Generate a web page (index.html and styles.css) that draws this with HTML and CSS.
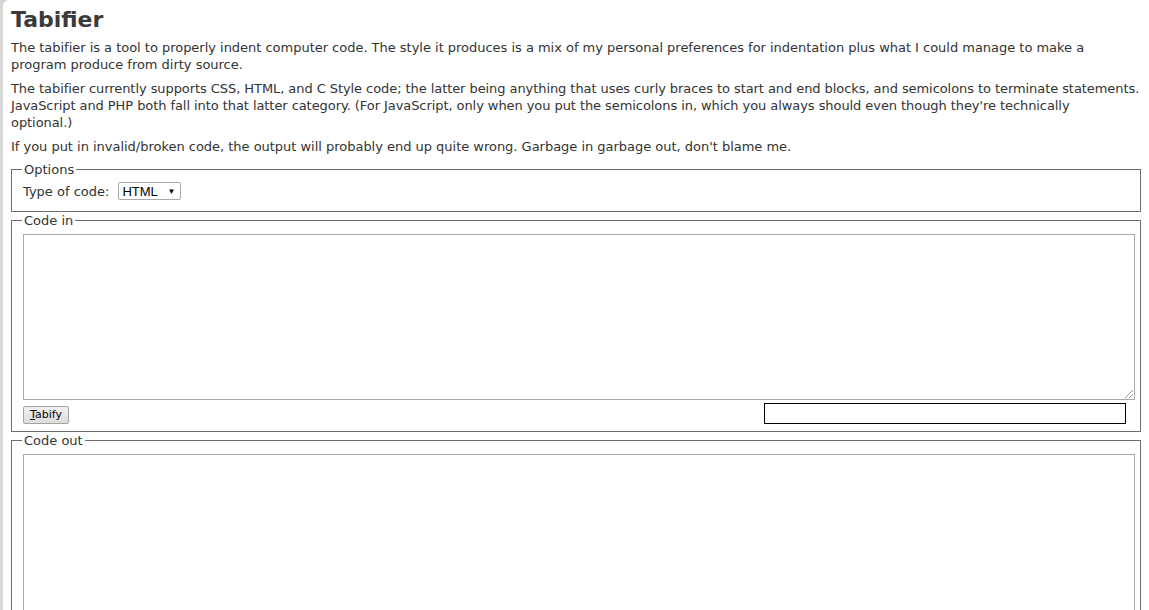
FILE: index.html
```html
<!DOCTYPE html>
<html>
<head>
<meta charset="utf-8">
<title>Tabifier</title>
<link rel="stylesheet" href="styles.css">
</head>
<body>
<div class="page">
  <h1 class="title">Tabifier</h1>
  <p class="para">The tabifier is a tool to properly indent computer code. The style it produces is a mix of my personal preferences for indentation plus what I could manage to make a program produce from dirty source.</p>
  <p class="para para-tight">The tabifier currently supports CSS, HTML, and C Style code; the latter being anything that uses curly braces to start and end blocks, and semicolons to terminate statements. JavaScript and PHP both fall into that latter category. (For JavaScript, only when you put the semicolons in, which you always should even though they're technically<br>optional.)</p>
  <p class="para para-last">If you put in invalid/broken code, the output will probably end up quite wrong. Garbage in garbage out, don't blame me.</p>

  <fieldset class="box box-options">
    <legend class="legend">Options</legend>
    <label class="opt-row">Type of code:
      <span class="select">HTML<span class="arrow">▼</span></span>
    </label>
  </fieldset>

  <fieldset class="box box-in">
    <legend class="legend">Code in</legend>
    <div class="area area-in"></div>
    <div class="actions">
      <button class="btn" type="button"><u>T</u>abify</button>
      <span class="field"></span>
    </div>
  </fieldset>

  <fieldset class="box box-out">
    <legend class="legend">Code out</legend>
    <div class="area area-out"></div>
  </fieldset>
</div>
</body>
</html>
```

FILE: styles.css
```css
html, body {
  margin: 0;
  padding: 0;
  height: 100%;
  overflow: hidden;
}
body {
  background: #d6d6d6;
  font-family: "DejaVu Sans", Verdana, sans-serif;
  font-size: 13px;
  line-height: 17px;
  color: #333;
}
.page {
  margin-left: 3px;
  min-height: 100%;
  background: #fff;
  border-top-left-radius: 6px;
  padding: 6px 7px 0 8px;
  box-sizing: border-box;
}
.title {
  margin: 0 0 5px 0;
  font-size: 22px;
  line-height: 28px;
  font-weight: bold;
  color: #3a3a3a;
}
.para {
  margin: 0 0 7px 0;
  letter-spacing: -0.02px;
}
.para-tight {
  letter-spacing: -0.07px;
}
.para-last {
  margin-bottom: 6px;
}
.box {
  margin: 0 1px 0 0;
  padding: 0 11px 11px 11px;
  border: 1px solid #6e6e6e;
  min-width: 0;
}
.box-in {
  padding-bottom: 7px;
}
.legend {
  padding: 0 2px;
  margin-left: -1px;
  color: #333;
  line-height: 17px;
}
.opt-row {
  display: flex;
  align-items: center;
  gap: 9px;
  margin-top: 4px;
}
.select {
  display: inline-flex;
  align-items: center;
  justify-content: space-between;
  box-sizing: border-box;
  width: 63px;
  height: 18px;
  padding: 0 5px 0 3px;
  border: 1px solid #a9a9a9;
  border-radius: 2px;
  background: #fff;
  font-family: "Liberation Sans", Arial, sans-serif;
  font-size: 13px;
  color: #000;
}
.arrow {
  font-size: 8px;
}
.area {
  box-sizing: border-box;
  width: calc(100% + 6px);
  border: 1px solid #a9a9a9;
  background: #fff;
  margin-top: 5px;
}
.area-in {
  height: 166px;
  position: relative;
}
.area-in::after {
  content: "";
  position: absolute;
  right: 1px;
  bottom: 1px;
  width: 8px;
  height: 8px;
  background: linear-gradient(135deg, transparent 45%, #999 45%, #999 52%, transparent 52%, transparent 70%, #999 70%, #999 77%, transparent 77%);
}
.area-out {
  height: 200px;
}
.actions {
  display: flex;
  justify-content: space-between;
  align-items: center;
  margin-top: 3px;
}
.btn {
  box-sizing: border-box;
  width: 46px;
  height: 18px;
  margin-top: 2px;
  padding: 0;
  border: 1px solid #a3a3a3;
  border-radius: 2px;
  background: linear-gradient(#f2f2f2, #dcdcdc);
  font-family: "DejaVu Sans", Verdana, sans-serif;
  font-size: 11px;
  color: #000;
}
.field {
  display: block;
  box-sizing: border-box;
  width: 362px;
  height: 21px;
  margin-right: 3px;
  border: 1px solid #000;
  background: #fff;
}
```
